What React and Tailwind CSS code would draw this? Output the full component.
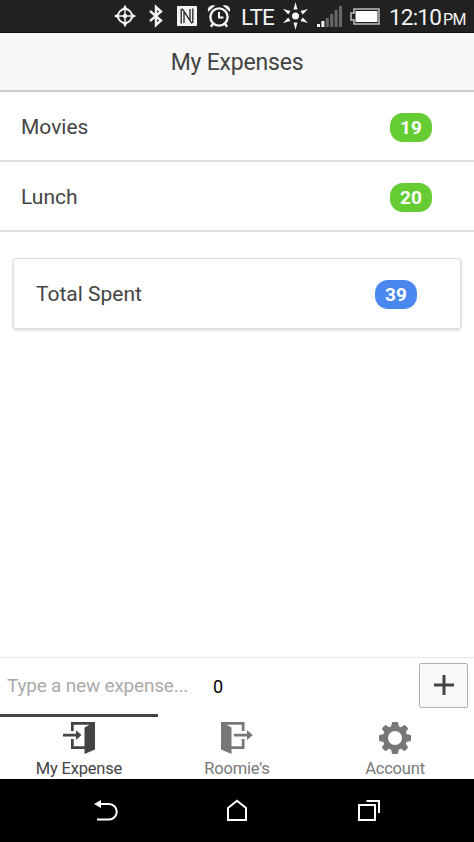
const StatusBar = () => (
  <div className="h-[33px] bg-[#212121] border-b border-[#111] flex items-center justify-end text-[#f4f4f4] pr-[7px] shrink-0">
    {/* GPS */}
    <svg className="w-6 h-6 mr-[12px]" viewBox="0 0 24 24" fill="none" stroke="currentColor">
      <circle cx="12" cy="12" r="7" strokeWidth="1.9" />
      <circle cx="12" cy="12" r="2.2" fill="currentColor" stroke="none" />
      <path strokeWidth="1.4" d="M12 5v14M5 12h14" />
      <path fill="currentColor" stroke="none" d="M12 .8l2.600 4.400H9.400zM12 23.200l2.600-4.400H9.400zM.8 12l4.400-2.600v5.200zM23.200 12l-4.400-2.600v5.200z" />
    </svg>
    {/* Bluetooth */}
    <svg className="w-[14px] h-6 mr-[14px]" viewBox="0 0 14 24" fill="none" stroke="currentColor" strokeWidth="2.4">
      <path d="M1 7l11 9.500L7 21V3l5 4.500L1 17" />
    </svg>
    {/* NFC */}
    <svg className="w-5 h-[22px] mr-[10px]" viewBox="0 0 20 22">
      <rect x="0" y="1" width="20" height="20" rx="1" fill="#f4f4f4" />
      <path d="M4.200 4v14.500M5 3.500l8 12V4M15.800 18V3.500M15 18.500l-8-12V18" fill="none" stroke="#212121" strokeWidth="1.300" />
    </svg>
    {/* Alarm */}
    <svg className="w-6 h-6 mr-[10px]" viewBox="0 0 24 24" fill="none" stroke="currentColor">
      <circle cx="12" cy="13" r="8.600" strokeWidth="2.4" />
      <path strokeWidth="2" d="M12 8v5.500h4.500" />
      <path strokeWidth="2.4" d="M6.500 19l-2.600 3.800M17.500 19l2.600 3.800" />
      <path fill="currentColor" stroke="none" d="M1.200 7.800C-.5 3.500 4 .3 8.300 1.500zM22.800 7.800C24.500 3.500 20 .3 15.700 1.500z" />
    </svg>
    <span className="w-[34px] text-[22.500px] leading-none tracking-[-0.7px] mr-[7px] pt-[2px] whitespace-nowrap">LTE</span>
    {/* Brightness */}
    <svg className="w-[27px] h-7 mr-[8px]" viewBox="0 0 27 28" fill="currentColor">
      <circle cx="13.500" cy="14" r="3.500" />
      <path d="M13.500 0l2 7.500h-4zM13.500 28l2-7.500h-4zM1 7l7.500 2-2.200 3.500zM26 7l-7.500 2 2.200 3.500zM1 21l7.500-2-2.200-3.500zM26 21l-7.500-2 2.200-3.500z" />
    </svg>
    {/* Signal */}
    <svg className="w-[26px] h-6 mr-[7px]" viewBox="0 0 26 24">
      <path fill="#f4f4f4" d="M0 20h3v3H0zM4.400 17h3v6h-3z" />
      <path fill="#686868" d="M8.800 14h3v9h-3zM13.200 10h3v13h-3zM17.600 6h3v17h-3zM22 2h3v21h-3z" />
    </svg>
    {/* Battery */}
    <svg className="w-[30px] h-[17px] mr-[9px]" viewBox="0 0 30 17">
      <path fill="none" stroke="#bdbdbd" strokeWidth="1.500" d="M4 1h25v15H4v-4H1V5h3z" />
      <path fill="#fff" d="M5.500 3h22v11h-22z" />
    </svg>
    <span className="w-[54px] text-[22.500px] leading-none tracking-[-0.8px] pt-[2px] whitespace-nowrap">12:10</span>
    <span className="w-[24px] text-[16px] leading-none tracking-[-0.5px] pt-[7px]">PM</span>
  </div>
)

const ExpenseRow = ({ name, amount }) => (
  <div className="h-[70px] flex items-center justify-between border-b-2 border-[#e0e0e0] pl-[21px] pr-[42px] pt-[2px]">
    <span className="text-[21px] pt-px">{name}</span>
    <span className="w-[42px] h-[29px] rounded-[13px] bg-[#66cc33] text-white text-[19px] leading-none font-bold flex items-center justify-center pt-px">
      {amount}
    </span>
  </div>
)

const Tab = ({ label, active, children }) => (
  <button
    className={
      active
        ? 'w-[158px] border-t-[3px] border-[#444] text-[#444] flex flex-col items-center'
        : 'w-[158px] border-t-[3px] border-transparent text-[#777] flex flex-col items-center'
    }
  >
    <svg className="w-8 h-8 mt-[5px]" viewBox="0 0 32 32" fill="currentColor">
      {children}
    </svg>
    <span className="text-[16.500px] leading-[20px] tracking-[-0.2px] mt-[5px]">{label}</span>
  </button>
)

const App = () => {
  return (
    <div className="w-[474px] h-[842px] bg-white text-[#444] flex flex-col overflow-hidden font-['Roboto',sans-serif]">
      <StatusBar />

      <header className="h-[59px] bg-[#f7f7f7] border-b-2 border-[#ccc] flex items-center justify-center pt-[3px] shrink-0">
        <h1 className="text-[23px] tracking-[-0.2px]">My Expenses</h1>
      </header>

      <main className="flex-1">
        <ExpenseRow name="Movies" amount={19} />
        <ExpenseRow name="Lunch" amount={20} />

        <div className="h-[71px] mt-[26px] mx-[13px] border border-[#ddd] rounded-[3px] shadow-[0_1px_3px_rgba(0,0,0,0.2)] flex items-center justify-between pl-[22px] pr-[43px] pt-px">
          <span className="text-[21px] pt-px">Total Spent</span>
          <span className="w-[42px] h-[29px] rounded-[13px] bg-[#4a87ee] text-white text-[19px] leading-none font-bold flex items-center justify-center pt-px">
            39
          </span>
        </div>
      </main>

      {/* New expense form */}
      <div className="h-[57px] border-t border-[#e5e5e5] flex items-center pl-[7px] pr-[6px] shrink-0">
        <span className="w-[206px] text-[19px] tracking-[-0.2px] text-[#aaa]">Type a new expense...</span>
        <span className="text-[18px] text-black pt-px">0</span>
        <button className="ml-auto w-[49px] h-[45px] mb-[2px] bg-[#f8f8f8] border border-[#b2b2b2] rounded-[2px] flex items-center justify-center">
          <svg className="w-5 h-5" viewBox="0 0 20 20" stroke="#444" strokeWidth="3">
            <path d="M10 0v20M0 10h20" />
          </svg>
        </button>
      </div>

      <nav className="h-[65px] flex shrink-0">
        <Tab label="My Expense" active>
          <path d="M8 0h24v27.500L21.500 32V5.500L26.500 2.700H10.700V9H8zM8 17h2.700v7.300h10.800V27H8z" />
          <path d="M0 11.800h13V8.200l5.500 4.900-5.500 4.900v-3.500H0z" />
        </Tab>
        <Tab label="Roomie's">
          <path d="M0 0h23.500v9h-2.700V2.700H5.500l5 2.800v18.800h10.300V17h2.700v10h-13v5L0 27.500z" />
          <path d="M13 11.800h13V8.200l5.800 4.900-5.800 4.900v-3.500H13z" />
        </Tab>
        <Tab label="Account">
          <path
            fillRule="evenodd"
            d="M14 0h4q1 0 1.200 1l.6 3.300 2.200.9 2.800-2q.8-.5 1.500.2l2.300 2.300q.7.700.2 1.500l-2 2.800.9 2.200 3.300.6q1 .2 1 1.200v4q0 1-1 1.200l-3.300.6-.9 2.200 2 2.800q.5.800-.2 1.500l-2.300 2.300q-.7.700-1.500.2l-2.800-2-2.200.9-.6 3.300q-.2 1-1.200 1h-4q-1 0-1.200-1l-.6-3.300-2.200-.9-2.800 2q-.8.500-1.500-.2l-2.300-2.300q-.7-.7-.2-1.500l2-2.800-.9-2.200-3.300-.6q-1-.2-1-1.200v-4q0-1 1-1.200l3.300-.6.9-2.200-2-2.800q-.5-.8.200-1.500l2.300-2.300q.7-.7 1.500-.2l2.800 2 2.200-.9.600-3.300q.2-1 1.200-1zM16 9a7 7 0 100 14 7 7 0 000-14z"
          />
        </Tab>
      </nav>

      {/* Android navigation */}
      <div className="h-[63px] bg-black flex items-center justify-around px-[40px] shrink-0">
        <svg className="w-6 h-6" viewBox="0 0 24 24" fill="none" stroke="#fff" strokeWidth="2">
          <path d="M5 5h10a7.500 7.500 0 010 15.500H3" />
          <path fill="#fff" stroke="none" d="M0 5l7-4v8z" />
        </svg>
        <svg className="w-6 h-6" viewBox="0 0 24 24" fill="none" stroke="#fff" strokeWidth="2">
          <path d="M3 21V9l9-7.300L21 9v12z" />
        </svg>
        <svg className="w-6 h-6" viewBox="0 0 24 24" fill="none" stroke="#fff" strokeWidth="2">
          <path d="M3 6h16v15H3zM10.500 2h12.500v12" />
        </svg>
      </div>
    </div>
  )
}

export default App
